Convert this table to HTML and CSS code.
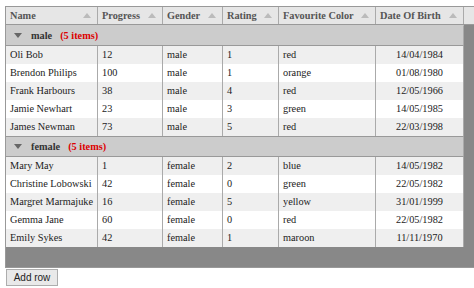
FILE: index.html
```html
<!DOCTYPE html>
<html>
<head>
<meta charset="utf-8">
<link rel="stylesheet" href="styles.css">
</head>
<body>
<div class="page">
  <div class="tabulator">
    <div class="header">
      <div class="cols">
        <div class="hcol"><span class="title">Name</span><span class="sort"></span></div>
        <div class="hcol"><span class="title">Progress</span><span class="sort"></span></div>
        <div class="hcol"><span class="title">Gender</span><span class="sort"></span></div>
        <div class="hcol"><span class="title">Rating</span><span class="sort"></span></div>
        <div class="hcol"><span class="title">Favourite Color</span><span class="sort"></span></div>
        <div class="hcol"><span class="title">Date Of Birth</span><span class="sort"></span></div>
      </div>
    </div>
    <div class="holder">
      <div class="group first"><span class="garrow"></span>male<span class="count">(5 items)</span></div>
      <div class="row odd"><div class="cell">Oli Bob</div><div class="cell">12</div><div class="cell">male</div><div class="cell">1</div><div class="cell">red</div><div class="cell c">14/04/1984</div></div>
      <div class="row"><div class="cell">Brendon Philips</div><div class="cell">100</div><div class="cell">male</div><div class="cell">1</div><div class="cell">orange</div><div class="cell c">01/08/1980</div></div>
      <div class="row odd"><div class="cell">Frank Harbours</div><div class="cell">38</div><div class="cell">male</div><div class="cell">4</div><div class="cell">red</div><div class="cell c">12/05/1966</div></div>
      <div class="row"><div class="cell">Jamie Newhart</div><div class="cell">23</div><div class="cell">male</div><div class="cell">3</div><div class="cell">green</div><div class="cell c">14/05/1985</div></div>
      <div class="row odd"><div class="cell">James Newman</div><div class="cell">73</div><div class="cell">male</div><div class="cell">5</div><div class="cell">red</div><div class="cell c">22/03/1998</div></div>
      <div class="group"><span class="garrow"></span>female<span class="count">(5 items)</span></div>
      <div class="row odd"><div class="cell">Mary May</div><div class="cell">1</div><div class="cell">female</div><div class="cell">2</div><div class="cell">blue</div><div class="cell c">14/05/1982</div></div>
      <div class="row"><div class="cell">Christine Lobowski</div><div class="cell">42</div><div class="cell">female</div><div class="cell">0</div><div class="cell">green</div><div class="cell c">22/05/1982</div></div>
      <div class="row odd"><div class="cell">Margret Marmajuke</div><div class="cell">16</div><div class="cell">female</div><div class="cell">5</div><div class="cell">yellow</div><div class="cell c">31/01/1999</div></div>
      <div class="row"><div class="cell">Gemma Jane</div><div class="cell">60</div><div class="cell">female</div><div class="cell">0</div><div class="cell">red</div><div class="cell c">22/05/1982</div></div>
      <div class="row odd"><div class="cell">Emily Sykes</div><div class="cell">42</div><div class="cell">female</div><div class="cell">1</div><div class="cell">maroon</div><div class="cell c">11/11/1970</div></div>
    </div>
  </div>
  <button class="addrow">Add row</button>
</div>
</body>
</html>
```
FILE: styles.css
```css
html, body {
  margin: 0;
  padding: 0;
  overflow: hidden;
  background: #fff;
}
.page {
  padding: 6px 0 0 5px;
  display: flex;
  flex-direction: column;
  align-items: flex-start;
}
.tabulator {
  width: 480px;
  border: 1px solid #999;
  background: #888;
  font-family: "Liberation Serif", "Times New Roman", serif;
  font-size: 10.3px;
}
.header {
  display: flex;
  background: #e6e6e6;
  border-bottom: 1px solid #999;
  height: 18px;
  box-sizing: border-box;
  color: #555;
  font-weight: bold;
}
.cols, .row {
  display: grid;
  grid-template-columns: 92px 65px 60px 56px 97px 88px;
  width: 458px;
}
.hcol {
  display: flex;
  align-items: center;
  box-sizing: border-box;
  border-right: 1px solid #aaa;
  padding: 0 6px 0 4px;
  height: 17px;
  white-space: nowrap;
}
.title {
  flex: 1;
}
.sort {
  width: 0;
  height: 0;
  border-left: 4px solid transparent;
  border-right: 4px solid transparent;
  border-bottom: 5px solid #bbb;
}
.holder {
  height: 242px;
  display: flex;
  flex-direction: column;
  background: #888;
}
.group {
  width: 458px;
  box-sizing: border-box;
  height: 21px;
  line-height: 19px;
  background: #ccc;
  border-top: 1px solid #999;
  border-bottom: 1px solid #999;
  border-right: 1px solid #aaa;
  padding-left: 8px;
  font-weight: bold;
  color: #333;
  display: flex;
  align-items: center;
}
.group.first {
  border-top-color: #ccc;
}
.garrow {
  width: 0;
  height: 0;
  border-left: 4px solid transparent;
  border-right: 4px solid transparent;
  border-top: 5px solid #666;
  margin-right: 9px;
}
.count {
  margin-left: 8px;
  color: #d00;
}
.row {
  background: #fff;
  color: #222;
  height: 18px;
}
.row.odd {
  background: #efefef;
}
.cell {
  box-sizing: border-box;
  border-right: 1px solid #aaa;
  padding: 0 4px;
  line-height: 18px;
  white-space: nowrap;
  overflow: hidden;
}
.cell.c {
  text-align: center;
}
.addrow {
  margin: 1px 0 0 1px;
  width: 52px;
  height: 17px;
  padding: 0;
  font-family: "Liberation Sans", Arial, sans-serif;
  font-size: 10px;
  color: #222;
  background: #e9e9e9;
  border: 1px solid #adadad;
  border-radius: 0;
}
```
